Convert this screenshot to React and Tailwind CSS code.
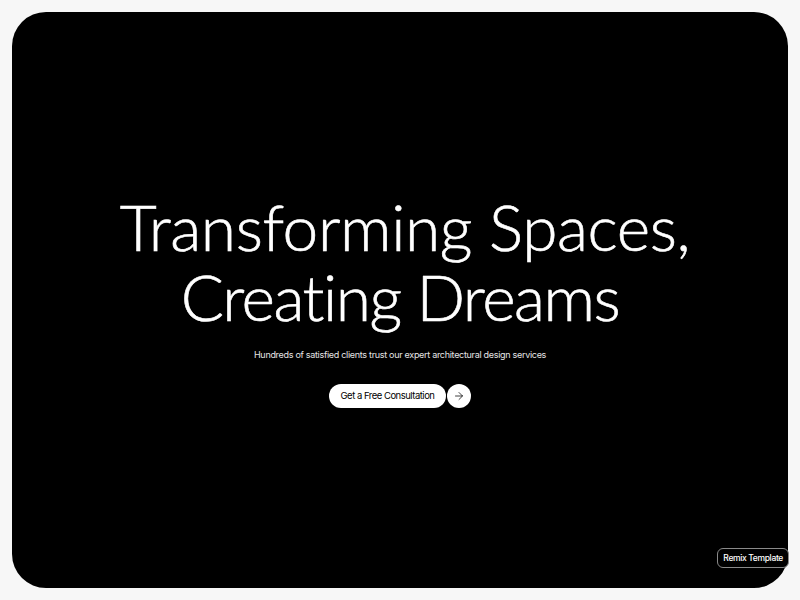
import { ArrowRight } from 'lucide-react'

function App() {
  return (
    <div className="relative h-[600px] w-[800px] bg-[#f7f7f7] p-3" style={{ fontFamily: 'Inter, sans-serif' }}>
      <div className="flex h-full w-full flex-col items-center justify-center rounded-[34px] bg-black">
        <h1
          className="flex flex-col items-center text-center text-[64px] font-light leading-[70px] text-white"
          style={{ fontFamily: 'Lato, sans-serif', WebkitTextStroke: '0.6px white' }}
        >
          <span className="pl-[10px] tracking-[-0.4px]">Transforming Spaces,</span>
          <span className="tracking-[-1.5px]">Creating Dreams</span>
        </h1>
        <p className="mt-[16px] text-[9px] tracking-[-0.3px] text-[#e5e5e5]">
          Hundreds of satisfied clients trust our expert architectural design services
        </p>
        <div className="mt-[22px] flex items-center">
          <button className="h-6 rounded-full bg-white px-3 text-[9.5px] tracking-[-0.5px] text-black">
            Get a Free Consultation
          </button>
          <span className="ml-[1px] flex h-6 w-6 items-center justify-center rounded-full bg-white text-black">
            <ArrowRight size={12} strokeWidth={1.5} />
          </span>
        </div>
      </div>
      <div className="absolute bottom-[32px] right-[11px] rounded-md border border-[#8a8a8a] bg-black px-[5px] py-[3px] text-[8.5px] font-medium leading-[12px] tracking-[-0.35px] text-white">
        Remix Template
      </div>
    </div>
  )
}

export default App
